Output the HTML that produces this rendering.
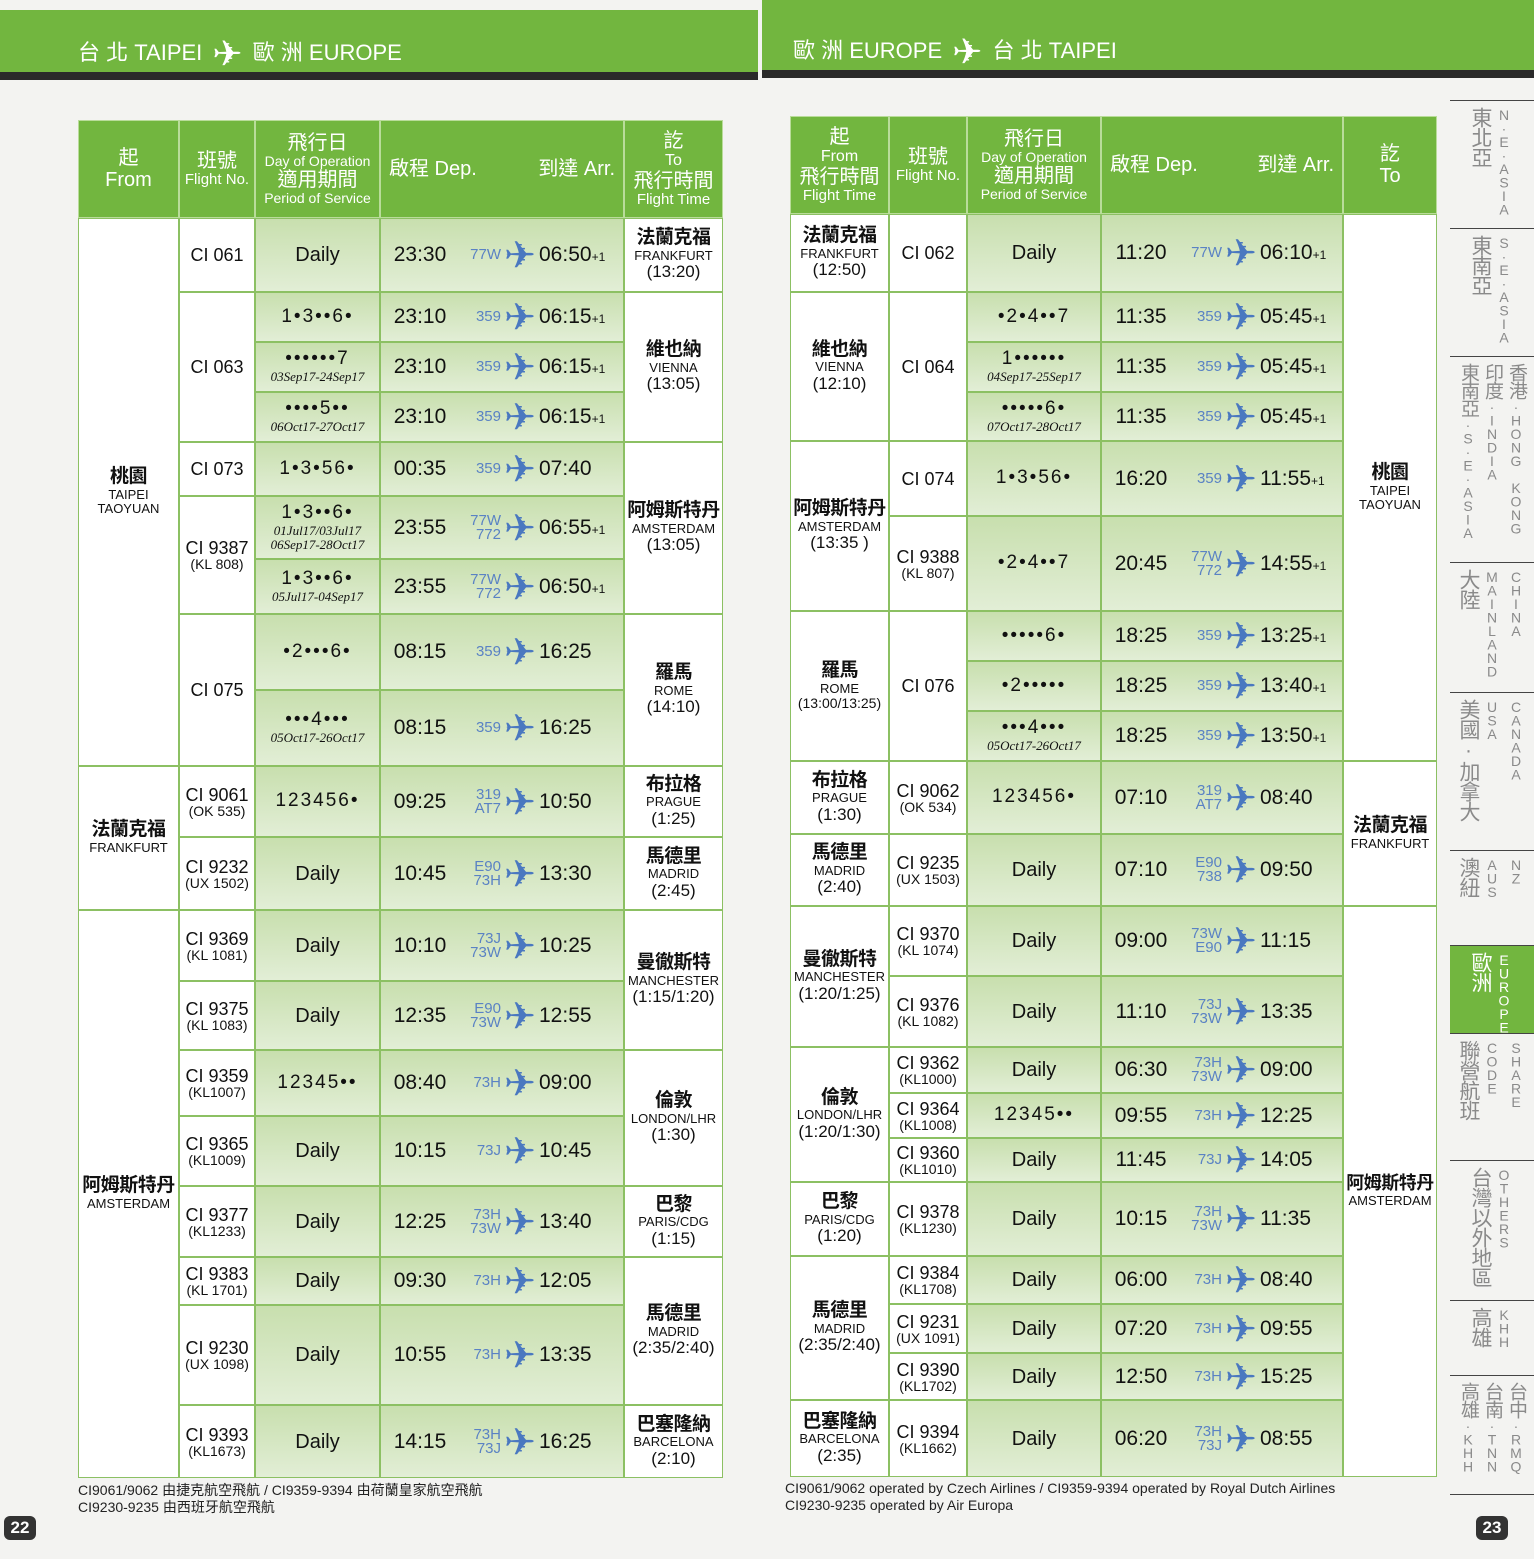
<!DOCTYPE html><html><head><meta charset="utf-8"><style>
body{margin:0;width:1534px;height:1559px;background:#f3f3f1;position:relative;overflow:hidden;font-family:"Liberation Sans","Noto Sans CJK TC",sans-serif;color:#111}
.hb{position:absolute;top:10px;height:62px;background:#72b63f}
.hl{position:absolute;top:72px;height:8px;background:#2a2a2a}
.ht{position:absolute;color:#fff;font-size:22px;top:34px;letter-spacing:0px}
.ht span{font-size:36px;font-family:"DejaVu Sans";vertical-align:-6px;margin:0 4px}
.c{position:absolute;box-sizing:border-box;border:1px solid #8cc063;display:flex;flex-direction:column;align-items:center;justify-content:center;text-align:center;background:#fff;line-height:1.1}
.h{background:#72b63f;color:#fff;border-color:#b9dc9a}
.s{background:linear-gradient(#c8dfae,#e2eed6)}
.big{font-size:20px}.sm{font-size:13px}.fn{font-size:18px;line-height:1}.fn small{font-size:14px;display:block}
.cn{font-size:19px;font-weight:bold;white-space:nowrap;letter-spacing:-0.5px}
.pt{font-size:19px;letter-spacing:2px}
.dt{font-family:"Liberation Serif",serif;font-style:italic;font-size:13px;letter-spacing:0}
.r{display:flex;align-items:center;width:100%;font-size:21px}
.r b{font-weight:normal;width:78px;text-align:center}
.r i{width:42px;text-align:right;color:#5a82c4;font-style:normal;font-size:15px;line-height:14px}
.r em{width:38px;color:#4a78c0;font-size:38px;line-height:30px;font-style:normal;font-family:"DejaVu Sans";text-align:center}
.r b:last-child{flex:1;text-align:left}
.r sup{font-size:12px;vertical-align:0}
.tab{position:absolute;left:1450px;width:84px;border-top:1.5px solid #444;color:#8a8a8a;display:flex;justify-content:center;padding-top:6px;box-sizing:border-box;font-size:21px}
.tab div{writing-mode:vertical-rl;text-orientation:upright;line-height:24px;letter-spacing:-1px;white-space:nowrap}
.tab .e{font-size:14px;letter-spacing:-2.5px}
.ft{position:absolute;font-size:14px;color:#222;line-height:17px}
.pg{position:absolute;top:1516px;width:32px;height:24px;background:#333;color:#fff;border-radius:6px;font-size:17px;text-align:center;line-height:24px;font-weight:bold}
</style></head><body>
<div class="hb" style="left:0;width:758px"></div><div class="hl" style="left:0;width:758px"></div>
<div class="hb" style="left:762px;width:772px;top:0;height:70px"></div><div class="hl" style="left:762px;width:772px;top:70px"></div>
<div class="ht" style="left:78px">台 北 TAIPEI <span>✈</span> 歐 洲 EUROPE</div>
<div class="ht" style="left:793px;top:32px">歐 洲 EUROPE <span>✈</span> 台 北 TAIPEI</div>

<div class="c h" style="left:78px;top:120px;width:101px;height:98px"><div class="big">起</div><div class="big">From</div></div>
<div class="c h" style="left:179px;top:120px;width:76px;height:98px"><div class="big">班號</div><div style="font-size:15px">Flight No.</div></div>
<div class="c h" style="left:255px;top:120px;width:125px;height:98px"><div class="big">飛行日</div><div style="font-size:14px">Day of Operation</div><div class="big">適用期間</div><div style="font-size:14px">Period of Service</div></div>
<div class="c h" style="left:380px;top:120px;width:244px;height:98px;flex-direction:row;justify-content:space-between;padding:0 8px"><span class="big">啟程 Dep.</span><span class="big">到達 Arr.</span></div>
<div class="c h" style="left:624px;top:120px;width:99px;height:98px"><div class="big">訖</div><div style="font-size:16px">To</div><div class="big">飛行時間</div><div style="font-size:15px">Flight Time</div></div>

<div class="c" style="left:78px;top:218px;width:101px;height:548px"><div class="cn">桃園</div><div class="sm">TAIPEI<br>TAOYUAN</div></div>
<div class="c" style="left:78px;top:766px;width:101px;height:144px"><div class="cn">法蘭克福</div><div class="sm">FRANKFURT</div></div>
<div class="c" style="left:78px;top:910px;width:101px;height:568px"><div class="cn">阿姆斯特丹</div><div class="sm">AMSTERDAM</div></div>

<div class="c fn" style="left:179px;top:218px;width:76px;height:74px">CI 061</div>
<div class="c fn" style="left:179px;top:292px;width:76px;height:150px">CI 063</div>
<div class="c fn" style="left:179px;top:442px;width:76px;height:54px">CI 073</div>
<div class="c fn" style="left:179px;top:496px;width:76px;height:118px">CI 9387<small>(KL 808)</small></div>
<div class="c fn" style="left:179px;top:614px;width:76px;height:152px">CI 075</div>
<div class="c fn" style="left:179px;top:766px;width:76px;height:71px">CI 9061<small>(OK 535)</small></div>
<div class="c fn" style="left:179px;top:837px;width:76px;height:73px">CI 9232<small>(UX 1502)</small></div>
<div class="c fn" style="left:179px;top:910px;width:76px;height:71px">CI 9369<small>(KL 1081)</small></div>
<div class="c fn" style="left:179px;top:981px;width:76px;height:69px">CI 9375<small>(KL 1083)</small></div>
<div class="c fn" style="left:179px;top:1050px;width:76px;height:66px">CI 9359<small>(KL1007)</small></div>
<div class="c fn" style="left:179px;top:1116px;width:76px;height:70px">CI 9365<small>(KL1009)</small></div>
<div class="c fn" style="left:179px;top:1186px;width:76px;height:71px">CI 9377<small>(KL1233)</small></div>
<div class="c fn" style="left:179px;top:1257px;width:76px;height:48px">CI 9383<small>(KL 1701)</small></div>
<div class="c fn" style="left:179px;top:1305px;width:76px;height:100px">CI 9230<small>(UX 1098)</small></div>
<div class="c fn" style="left:179px;top:1405px;width:76px;height:73px">CI 9393<small>(KL1673)</small></div>

<div class="c s big" style="left:255px;top:218px;width:125px;height:74px">Daily</div>
<div class="c s" style="left:255px;top:292px;width:125px;height:50px"><div class="pt">1•3••6•</div></div>
<div class="c s" style="left:255px;top:342px;width:125px;height:50px"><div class="pt">••••••7</div><div class="dt">03Sep17-24Sep17</div></div>
<div class="c s" style="left:255px;top:392px;width:125px;height:50px"><div class="pt">••••5••</div><div class="dt">06Oct17-27Oct17</div></div>
<div class="c s" style="left:255px;top:442px;width:125px;height:54px"><div class="pt">1•3•56•</div></div>
<div class="c s" style="left:255px;top:496px;width:125px;height:63px"><div class="pt">1•3••6•</div><div class="dt">01Jul17/03Jul17<br>06Sep17-28Oct17</div></div>
<div class="c s" style="left:255px;top:559px;width:125px;height:55px"><div class="pt">1•3••6•</div><div class="dt">05Jul17-04Sep17</div></div>
<div class="c s" style="left:255px;top:614px;width:125px;height:76px"><div class="pt">•2•••6•</div></div>
<div class="c s" style="left:255px;top:690px;width:125px;height:76px"><div class="pt">•••4•••</div><div class="dt">05Oct17-26Oct17</div></div>
<div class="c s" style="left:255px;top:766px;width:125px;height:71px"><div class="pt">123456•</div></div>
<div class="c s big" style="left:255px;top:837px;width:125px;height:73px">Daily</div>
<div class="c s big" style="left:255px;top:910px;width:125px;height:71px">Daily</div>
<div class="c s big" style="left:255px;top:981px;width:125px;height:69px">Daily</div>
<div class="c s" style="left:255px;top:1050px;width:125px;height:66px"><div class="pt">12345••</div></div>
<div class="c s big" style="left:255px;top:1116px;width:125px;height:70px">Daily</div>
<div class="c s big" style="left:255px;top:1186px;width:125px;height:71px">Daily</div>
<div class="c s big" style="left:255px;top:1257px;width:125px;height:48px">Daily</div>
<div class="c s big" style="left:255px;top:1305px;width:125px;height:100px">Daily</div>
<div class="c s big" style="left:255px;top:1405px;width:125px;height:73px">Daily</div>

<div class="c s" style="left:380px;top:218px;width:244px;height:74px"><div class="r"><b>23:30</b><i>77W</i><em>✈</em><b>06:50<sup>+1</sup></b></div></div>
<div class="c s" style="left:380px;top:292px;width:244px;height:50px"><div class="r"><b>23:10</b><i>359</i><em>✈</em><b>06:15<sup>+1</sup></b></div></div>
<div class="c s" style="left:380px;top:342px;width:244px;height:50px"><div class="r"><b>23:10</b><i>359</i><em>✈</em><b>06:15<sup>+1</sup></b></div></div>
<div class="c s" style="left:380px;top:392px;width:244px;height:50px"><div class="r"><b>23:10</b><i>359</i><em>✈</em><b>06:15<sup>+1</sup></b></div></div>
<div class="c s" style="left:380px;top:442px;width:244px;height:54px"><div class="r"><b>00:35</b><i>359</i><em>✈</em><b>07:40</b></div></div>
<div class="c s" style="left:380px;top:496px;width:244px;height:63px"><div class="r"><b>23:55</b><i>77W<br>772</i><em>✈</em><b>06:55<sup>+1</sup></b></div></div>
<div class="c s" style="left:380px;top:559px;width:244px;height:55px"><div class="r"><b>23:55</b><i>77W<br>772</i><em>✈</em><b>06:50<sup>+1</sup></b></div></div>
<div class="c s" style="left:380px;top:614px;width:244px;height:76px"><div class="r"><b>08:15</b><i>359</i><em>✈</em><b>16:25</b></div></div>
<div class="c s" style="left:380px;top:690px;width:244px;height:76px"><div class="r"><b>08:15</b><i>359</i><em>✈</em><b>16:25</b></div></div>
<div class="c s" style="left:380px;top:766px;width:244px;height:71px"><div class="r"><b>09:25</b><i>319<br>AT7</i><em>✈</em><b>10:50</b></div></div>
<div class="c s" style="left:380px;top:837px;width:244px;height:73px"><div class="r"><b>10:45</b><i>E90<br>73H</i><em>✈</em><b>13:30</b></div></div>
<div class="c s" style="left:380px;top:910px;width:244px;height:71px"><div class="r"><b>10:10</b><i>73J<br>73W</i><em>✈</em><b>10:25</b></div></div>
<div class="c s" style="left:380px;top:981px;width:244px;height:69px"><div class="r"><b>12:35</b><i>E90<br>73W</i><em>✈</em><b>12:55</b></div></div>
<div class="c s" style="left:380px;top:1050px;width:244px;height:66px"><div class="r"><b>08:40</b><i>73H</i><em>✈</em><b>09:00</b></div></div>
<div class="c s" style="left:380px;top:1116px;width:244px;height:70px"><div class="r"><b>10:15</b><i>73J</i><em>✈</em><b>10:45</b></div></div>
<div class="c s" style="left:380px;top:1186px;width:244px;height:71px"><div class="r"><b>12:25</b><i>73H<br>73W</i><em>✈</em><b>13:40</b></div></div>
<div class="c s" style="left:380px;top:1257px;width:244px;height:48px"><div class="r"><b>09:30</b><i>73H</i><em>✈</em><b>12:05</b></div></div>
<div class="c s" style="left:380px;top:1305px;width:244px;height:100px"><div class="r"><b>10:55</b><i>73H</i><em>✈</em><b>13:35</b></div></div>
<div class="c s" style="left:380px;top:1405px;width:244px;height:73px"><div class="r"><b>14:15</b><i>73H<br>73J</i><em>✈</em><b>16:25</b></div></div>

<div class="c" style="left:624px;top:218px;width:99px;height:74px"><div class="cn">法蘭克福</div><div class="sm">FRANKFURT</div><div style="font-size:17px">(13:20)</div></div>
<div class="c" style="left:624px;top:292px;width:99px;height:150px"><div class="cn">維也納</div><div class="sm">VIENNA</div><div style="font-size:17px">(13:05)</div></div>
<div class="c" style="left:624px;top:442px;width:99px;height:172px"><div class="cn">阿姆斯特丹</div><div class="sm">AMSTERDAM</div><div style="font-size:17px">(13:05)</div></div>
<div class="c" style="left:624px;top:614px;width:99px;height:152px"><div class="cn">羅馬</div><div class="sm">ROME</div><div style="font-size:17px">(14:10)</div></div>
<div class="c" style="left:624px;top:766px;width:99px;height:71px"><div class="cn">布拉格</div><div class="sm">PRAGUE</div><div style="font-size:17px">(1:25)</div></div>
<div class="c" style="left:624px;top:837px;width:99px;height:73px"><div class="cn">馬德里</div><div class="sm">MADRID</div><div style="font-size:17px">(2:45)</div></div>
<div class="c" style="left:624px;top:910px;width:99px;height:140px"><div class="cn">曼徹斯特</div><div class="sm">MANCHESTER</div><div style="font-size:17px">(1:15/1:20)</div></div>
<div class="c" style="left:624px;top:1050px;width:99px;height:136px"><div class="cn">倫敦</div><div class="sm">LONDON/LHR</div><div style="font-size:17px">(1:30)</div></div>
<div class="c" style="left:624px;top:1186px;width:99px;height:71px"><div class="cn">巴黎</div><div class="sm">PARIS/CDG</div><div style="font-size:17px">(1:15)</div></div>
<div class="c" style="left:624px;top:1257px;width:99px;height:148px"><div class="cn">馬德里</div><div class="sm">MADRID</div><div style="font-size:17px">(2:35/2:40)</div></div>
<div class="c" style="left:624px;top:1405px;width:99px;height:73px"><div class="cn">巴塞隆納</div><div class="sm">BARCELONA</div><div style="font-size:17px">(2:10)</div></div>

<div class="c h" style="left:790px;top:116px;width:99px;height:98px"><div class="big">起</div><div style="font-size:16px">From</div><div class="big">飛行時間</div><div style="font-size:15px">Flight Time</div></div>
<div class="c h" style="left:889px;top:116px;width:78px;height:98px"><div class="big">班號</div><div style="font-size:15px">Flight No.</div></div>
<div class="c h" style="left:967px;top:116px;width:134px;height:98px"><div class="big">飛行日</div><div style="font-size:14px">Day of Operation</div><div class="big">適用期間</div><div style="font-size:14px">Period of Service</div></div>
<div class="c h" style="left:1101px;top:116px;width:242px;height:98px;flex-direction:row;justify-content:space-between;padding:0 8px"><span class="big">啟程 Dep.</span><span class="big">到達 Arr.</span></div>
<div class="c h" style="left:1343px;top:116px;width:94px;height:98px"><div class="big">訖</div><div class="big">To</div></div>

<div class="c" style="left:790px;top:214px;width:99px;height:78px"><div class="cn">法蘭克福</div><div class="sm">FRANKFURT</div><div style="font-size:17px">(12:50)</div></div>
<div class="c" style="left:790px;top:292px;width:99px;height:149px"><div class="cn">維也納</div><div class="sm">VIENNA</div><div style="font-size:17px">(12:10)</div></div>
<div class="c" style="left:790px;top:441px;width:99px;height:170px"><div class="cn">阿姆斯特丹</div><div class="sm">AMSTERDAM</div><div style="font-size:17px">(13:35 )</div></div>
<div class="c" style="left:790px;top:611px;width:99px;height:150px"><div class="cn">羅馬</div><div class="sm">ROME</div><div style="font-size:14px">(13:00/13:25)</div></div>
<div class="c" style="left:790px;top:761px;width:99px;height:73px"><div class="cn">布拉格</div><div class="sm">PRAGUE</div><div style="font-size:17px">(1:30)</div></div>
<div class="c" style="left:790px;top:834px;width:99px;height:72px"><div class="cn">馬德里</div><div class="sm">MADRID</div><div style="font-size:17px">(2:40)</div></div>
<div class="c" style="left:790px;top:906px;width:99px;height:141px"><div class="cn">曼徹斯特</div><div class="sm">MANCHESTER</div><div style="font-size:17px">(1:20/1:25)</div></div>
<div class="c" style="left:790px;top:1047px;width:99px;height:135px"><div class="cn">倫敦</div><div class="sm">LONDON/LHR</div><div style="font-size:17px">(1:20/1:30)</div></div>
<div class="c" style="left:790px;top:1182px;width:99px;height:74px"><div class="cn">巴黎</div><div class="sm">PARIS/CDG</div><div style="font-size:17px">(1:20)</div></div>
<div class="c" style="left:790px;top:1256px;width:99px;height:144px"><div class="cn">馬德里</div><div class="sm">MADRID</div><div style="font-size:17px">(2:35/2:40)</div></div>
<div class="c" style="left:790px;top:1400px;width:99px;height:77px"><div class="cn">巴塞隆納</div><div class="sm">BARCELONA</div><div style="font-size:17px">(2:35)</div></div>

<div class="c fn" style="left:889px;top:214px;width:78px;height:78px">CI 062</div>
<div class="c fn" style="left:889px;top:292px;width:78px;height:149px">CI 064</div>
<div class="c fn" style="left:889px;top:441px;width:78px;height:75px">CI 074</div>
<div class="c fn" style="left:889px;top:516px;width:78px;height:95px">CI 9388<small>(KL 807)</small></div>
<div class="c fn" style="left:889px;top:611px;width:78px;height:150px">CI 076</div>
<div class="c fn" style="left:889px;top:761px;width:78px;height:73px">CI 9062<small>(OK 534)</small></div>
<div class="c fn" style="left:889px;top:834px;width:78px;height:72px">CI 9235<small>(UX 1503)</small></div>
<div class="c fn" style="left:889px;top:906px;width:78px;height:70px">CI 9370<small>(KL 1074)</small></div>
<div class="c fn" style="left:889px;top:976px;width:78px;height:71px">CI 9376<small>(KL 1082)</small></div>
<div class="c fn" style="left:889px;top:1047px;width:78px;height:46px">CI 9362<small>(KL1000)</small></div>
<div class="c fn" style="left:889px;top:1093px;width:78px;height:45px">CI 9364<small>(KL1008)</small></div>
<div class="c fn" style="left:889px;top:1138px;width:78px;height:44px">CI 9360<small>(KL1010)</small></div>
<div class="c fn" style="left:889px;top:1182px;width:78px;height:74px">CI 9378<small>(KL1230)</small></div>
<div class="c fn" style="left:889px;top:1256px;width:78px;height:48px">CI 9384<small>(KL1708)</small></div>
<div class="c fn" style="left:889px;top:1304px;width:78px;height:49px">CI 9231<small>(UX 1091)</small></div>
<div class="c fn" style="left:889px;top:1353px;width:78px;height:47px">CI 9390<small>(KL1702)</small></div>
<div class="c fn" style="left:889px;top:1400px;width:78px;height:77px">CI 9394<small>(KL1662)</small></div>

<div class="c s big" style="left:967px;top:214px;width:134px;height:78px">Daily</div>
<div class="c s" style="left:967px;top:292px;width:134px;height:50px"><div class="pt">•2•4••7</div></div>
<div class="c s" style="left:967px;top:342px;width:134px;height:50px"><div class="pt">1••••••</div><div class="dt">04Sep17-25Sep17</div></div>
<div class="c s" style="left:967px;top:392px;width:134px;height:49px"><div class="pt">•••••6•</div><div class="dt">07Oct17-28Oct17</div></div>
<div class="c s" style="left:967px;top:441px;width:134px;height:75px"><div class="pt">1•3•56•</div></div>
<div class="c s" style="left:967px;top:516px;width:134px;height:95px"><div class="pt">•2•4••7</div></div>
<div class="c s" style="left:967px;top:611px;width:134px;height:50px"><div class="pt">•••••6•</div></div>
<div class="c s" style="left:967px;top:661px;width:134px;height:50px"><div class="pt">•2•••••</div></div>
<div class="c s" style="left:967px;top:711px;width:134px;height:50px"><div class="pt">•••4•••</div><div class="dt">05Oct17-26Oct17</div></div>
<div class="c s" style="left:967px;top:761px;width:134px;height:73px"><div class="pt">123456•</div></div>
<div class="c s big" style="left:967px;top:834px;width:134px;height:72px">Daily</div>
<div class="c s big" style="left:967px;top:906px;width:134px;height:70px">Daily</div>
<div class="c s big" style="left:967px;top:976px;width:134px;height:71px">Daily</div>
<div class="c s big" style="left:967px;top:1047px;width:134px;height:46px">Daily</div>
<div class="c s" style="left:967px;top:1093px;width:134px;height:45px"><div class="pt">12345••</div></div>
<div class="c s big" style="left:967px;top:1138px;width:134px;height:44px">Daily</div>
<div class="c s big" style="left:967px;top:1182px;width:134px;height:74px">Daily</div>
<div class="c s big" style="left:967px;top:1256px;width:134px;height:48px">Daily</div>
<div class="c s big" style="left:967px;top:1304px;width:134px;height:49px">Daily</div>
<div class="c s big" style="left:967px;top:1353px;width:134px;height:47px">Daily</div>
<div class="c s big" style="left:967px;top:1400px;width:134px;height:77px">Daily</div>

<div class="c s" style="left:1101px;top:214px;width:242px;height:78px"><div class="r"><b>11:20</b><i>77W</i><em>✈</em><b>06:10<sup>+1</sup></b></div></div>
<div class="c s" style="left:1101px;top:292px;width:242px;height:50px"><div class="r"><b>11:35</b><i>359</i><em>✈</em><b>05:45<sup>+1</sup></b></div></div>
<div class="c s" style="left:1101px;top:342px;width:242px;height:50px"><div class="r"><b>11:35</b><i>359</i><em>✈</em><b>05:45<sup>+1</sup></b></div></div>
<div class="c s" style="left:1101px;top:392px;width:242px;height:49px"><div class="r"><b>11:35</b><i>359</i><em>✈</em><b>05:45<sup>+1</sup></b></div></div>
<div class="c s" style="left:1101px;top:441px;width:242px;height:75px"><div class="r"><b>16:20</b><i>359</i><em>✈</em><b>11:55<sup>+1</sup></b></div></div>
<div class="c s" style="left:1101px;top:516px;width:242px;height:95px"><div class="r"><b>20:45</b><i>77W<br>772</i><em>✈</em><b>14:55<sup>+1</sup></b></div></div>
<div class="c s" style="left:1101px;top:611px;width:242px;height:50px"><div class="r"><b>18:25</b><i>359</i><em>✈</em><b>13:25<sup>+1</sup></b></div></div>
<div class="c s" style="left:1101px;top:661px;width:242px;height:50px"><div class="r"><b>18:25</b><i>359</i><em>✈</em><b>13:40<sup>+1</sup></b></div></div>
<div class="c s" style="left:1101px;top:711px;width:242px;height:50px"><div class="r"><b>18:25</b><i>359</i><em>✈</em><b>13:50<sup>+1</sup></b></div></div>
<div class="c s" style="left:1101px;top:761px;width:242px;height:73px"><div class="r"><b>07:10</b><i>319<br>AT7</i><em>✈</em><b>08:40</b></div></div>
<div class="c s" style="left:1101px;top:834px;width:242px;height:72px"><div class="r"><b>07:10</b><i>E90<br>738</i><em>✈</em><b>09:50</b></div></div>
<div class="c s" style="left:1101px;top:906px;width:242px;height:70px"><div class="r"><b>09:00</b><i>73W<br>E90</i><em>✈</em><b>11:15</b></div></div>
<div class="c s" style="left:1101px;top:976px;width:242px;height:71px"><div class="r"><b>11:10</b><i>73J<br>73W</i><em>✈</em><b>13:35</b></div></div>
<div class="c s" style="left:1101px;top:1047px;width:242px;height:46px"><div class="r"><b>06:30</b><i>73H<br>73W</i><em>✈</em><b>09:00</b></div></div>
<div class="c s" style="left:1101px;top:1093px;width:242px;height:45px"><div class="r"><b>09:55</b><i>73H</i><em>✈</em><b>12:25</b></div></div>
<div class="c s" style="left:1101px;top:1138px;width:242px;height:44px"><div class="r"><b>11:45</b><i>73J</i><em>✈</em><b>14:05</b></div></div>
<div class="c s" style="left:1101px;top:1182px;width:242px;height:74px"><div class="r"><b>10:15</b><i>73H<br>73W</i><em>✈</em><b>11:35</b></div></div>
<div class="c s" style="left:1101px;top:1256px;width:242px;height:48px"><div class="r"><b>06:00</b><i>73H</i><em>✈</em><b>08:40</b></div></div>
<div class="c s" style="left:1101px;top:1304px;width:242px;height:49px"><div class="r"><b>07:20</b><i>73H</i><em>✈</em><b>09:55</b></div></div>
<div class="c s" style="left:1101px;top:1353px;width:242px;height:47px"><div class="r"><b>12:50</b><i>73H</i><em>✈</em><b>15:25</b></div></div>
<div class="c s" style="left:1101px;top:1400px;width:242px;height:77px"><div class="r"><b>06:20</b><i>73H<br>73J</i><em>✈</em><b>08:55</b></div></div>

<div class="c" style="left:1343px;top:214px;width:94px;height:547px"><div class="cn">桃園</div><div class="sm">TAIPEI<br>TAOYUAN</div></div>
<div class="c" style="left:1343px;top:761px;width:94px;height:145px"><div class="cn">法蘭克福</div><div class="sm">FRANKFURT</div></div>
<div class="c" style="left:1343px;top:906px;width:94px;height:571px"><div class="cn" style="font-size:18px">阿姆斯特丹</div><div class="sm">AMSTERDAM</div></div>

<div class="tab" style="top:100px;height:128px"><div>東北亞</div><div class="e">N·E·ASIA</div></div>
<div class="tab" style="top:228px;height:128px"><div>東南亞</div><div class="e">S·E·ASIA</div></div>
<div class="tab" style="top:356px;height:206px;font-size:19px"><div>東南亞<span class="e">·S·E·ASIA</span></div><div>印度<span class="e">·INDIA</span></div><div>香港<span class="e">·HONG KONG</span></div></div>
<div class="tab" style="top:562px;height:130px"><div>大陸</div><div class="e">MAINLAND</div><div class="e">CHINA</div></div>
<div class="tab" style="top:692px;height:158px"><div>美國·加拿大</div><div class="e">USA</div><div class="e">CANADA</div></div>
<div class="tab" style="top:850px;height:95px"><div>澳紐</div><div class="e">AUS</div><div class="e">NZ</div></div>
<div class="tab" style="top:945px;height:88px;background:#72b63f;color:#fff"><div>歐洲</div><div class="e">EUROPE</div></div>
<div class="tab" style="top:1033px;height:127px"><div>聯營航班</div><div class="e">CODE</div><div class="e">SHARE</div></div>
<div class="tab" style="top:1160px;height:140px"><div>台灣以外地區</div><div class="e">OTHERS</div></div>
<div class="tab" style="top:1300px;height:75px"><div>高雄</div><div class="e">KHH</div></div>
<div class="tab" style="top:1375px;height:120px;border-bottom:1.5px solid #444;font-size:19px"><div>高雄<span class="e">·KHH</span></div><div>台南<span class="e">·TNN</span></div><div>台中<span class="e">·RMQ</span></div></div>

<div class="ft" style="left:78px;top:1482px">CI9061/9062 由捷克航空飛航 / CI9359-9394 由荷蘭皇家航空飛航<br>CI9230-9235 由西班牙航空飛航</div>
<div class="ft" style="left:785px;top:1480px">CI9061/9062 operated by Czech Airlines / CI9359-9394 operated by Royal Dutch Airlines<br>CI9230-9235 operated by Air Europa</div>
<div class="pg" style="left:4px">22</div>
<div class="pg" style="left:1476px">23</div>
</body></html>
